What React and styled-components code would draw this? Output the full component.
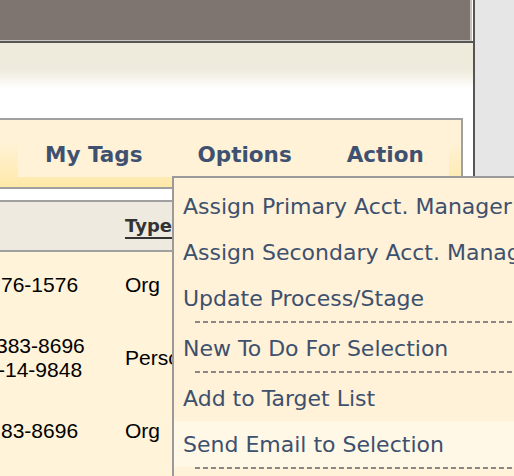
import { Fragment } from 'react';
import styled, { createGlobalStyle } from 'styled-components';

const GlobalStyle = createGlobalStyle`
  html, body {
    margin: 0;
    padding: 0;
    width: 514px;
    height: 476px;
    overflow: hidden;
    background: #e6e6e6;
    font-family: 'DejaVu Sans', Verdana, sans-serif;
  }
`;

const Page = styled.div`
  position: relative;
  display: flex;
  width: 514px;
  height: 476px;
  overflow: hidden;
`;

const Main = styled.section`
  width: 473px;
  flex-shrink: 0;
  border-right: 2px solid #555;
  background: #fff;
  display: flex;
  flex-direction: column;
`;

const Side = styled.aside`
  flex: 1;
  background: #e6e6e6;
`;

const TopFrame = styled.div`
  border-bottom: 2px solid #555;
`;

const TopBar = styled.header`
  height: 40px;
  margin-right: 1px;
  background: #7f7570;
  border-right: 2px solid #c9c1bd;
  border-bottom: 1px solid #cbc4c0;
`;

const Band = styled.div`
  height: 75px;
  background: linear-gradient(to bottom, #eeeadc 0, #eeeadc 34%, #f8f6ee 50%, #fff 60%);
`;

const TabBar = styled.nav`
  margin-right: 10px;
  border: 2px solid #a0a0a0;
  border-left: none;
  padding: 0 12px 10px 18px;
  background: linear-gradient(to bottom, #fff2d6 35%, #ffe9a8 100%);
`;

const TabList = styled.ul`
  list-style: none;
  margin: 0;
  height: 45px;
  padding: 12px 0 0 27px;
  display: flex;
  align-items: center;
  gap: 55px;
  background: #fff2d7;
`;

const Tab = styled.li`
  font-size: 21.5px;
  font-weight: bold;
  color: #3e5170;
  white-space: nowrap;
`;

const Table = styled.div`
  margin-top: 11px;
  margin-right: 10px;
  flex: 1;
  border-top: 2px solid #a0a0a0;
  background: #fff3d9;
  font-family: 'Liberation Sans', Arial, sans-serif;
`;

const HeadRow = styled.div`
  height: 48px;
  display: grid;
  grid-template-columns: 125px 1fr;
  align-items: center;
  background: #eeeadf;
  border-bottom: 2px solid #a0a0a0;
`;

const HeadCell = styled.div`
  font-family: 'DejaVu Sans', Verdana, sans-serif;
  font-size: 18px;
  font-weight: bold;
  color: #333;
  text-decoration: underline;
  text-decoration-thickness: 2px;
  text-underline-offset: 5px;
  padding-bottom: 2px;
`;

const Row = styled.div`
  display: grid;
  grid-template-columns: 125px 1fr;
  align-items: center;
  padding: 16px 0;
  min-height: 34px;
  font-size: 21px;
  line-height: 24px;
  color: #000;
`;

const Phone = styled.div`
  white-space: nowrap;
`;

const PhoneLine = styled.div`
  text-indent: ${(p) => p.$indent || 0}px;
`;

const Menu = styled.ul`
  position: absolute;
  top: 176px;
  left: 172px;
  width: 360px;
  height: 320px;
  margin: 0;
  padding: 5px 0 0;
  list-style: none;
  box-sizing: border-box;
  background: #fff2d8;
  border-top: 2px solid #9a9a9a;
  border-left: 2px solid #9a9a9a;
`;

const MenuItem = styled.li`
  height: 46px;
  display: flex;
  align-items: center;
  padding-left: 9px;
  font-size: 22px;
  color: #3d506e;
  white-space: nowrap;
  background: ${(p) => (p.$active ? '#fff8e7' : 'transparent')};
`;

const Separator = styled.li`
  height: 2px;
  margin: 0 0 2px 21px;
  background: repeating-linear-gradient(to right, #888 0 5px, transparent 5px 8px);
`;

const menu = [
  { label: 'Assign Primary Acct. Manager' },
  { label: 'Assign Secondary Acct. Manager' },
  { label: 'Update Process/Stage', sep: true },
  { label: 'New To Do For Selection', sep: true },
  { label: 'Add to Target List' },
  { label: 'Send Email to Selection', sep: true, active: true },
];

const rows = [
  { phones: [{ text: '76-1576', indent: 1 }], type: 'Org' },
  {
    phones: [
      { text: '383-8696', indent: -4 },
      { text: '-14-9848', indent: -2 },
    ],
    type: 'Person',
  },
  { phones: [{ text: '83-8696', indent: 1 }], type: 'Org' },
];

export default function App() {
  return (
    <>
      <GlobalStyle />
      <Page>
        <Main>
          <TopFrame>
            <TopBar />
          </TopFrame>
          <Band />
          <TabBar>
            <TabList>
              <Tab>My Tags</Tab>
              <Tab>Options</Tab>
              <Tab>Action</Tab>
            </TabList>
          </TabBar>
          <Table>
            <HeadRow>
              <div />
              <HeadCell>Type</HeadCell>
            </HeadRow>
            {rows.map((r, i) => (
              <Row key={i}>
                <Phone>
                  {r.phones.map((p) => (
                    <PhoneLine key={p.text} $indent={p.indent}>
                      {p.text}
                    </PhoneLine>
                  ))}
                </Phone>
                <div>{r.type}</div>
              </Row>
            ))}
          </Table>
        </Main>
        <Side />
        <Menu>
          {menu.map((m) => (
            <Fragment key={m.label}>
              <MenuItem $active={m.active}>{m.label}</MenuItem>
              {m.sep && <Separator />}
            </Fragment>
          ))}
        </Menu>
      </Page>
    </>
  );
}
